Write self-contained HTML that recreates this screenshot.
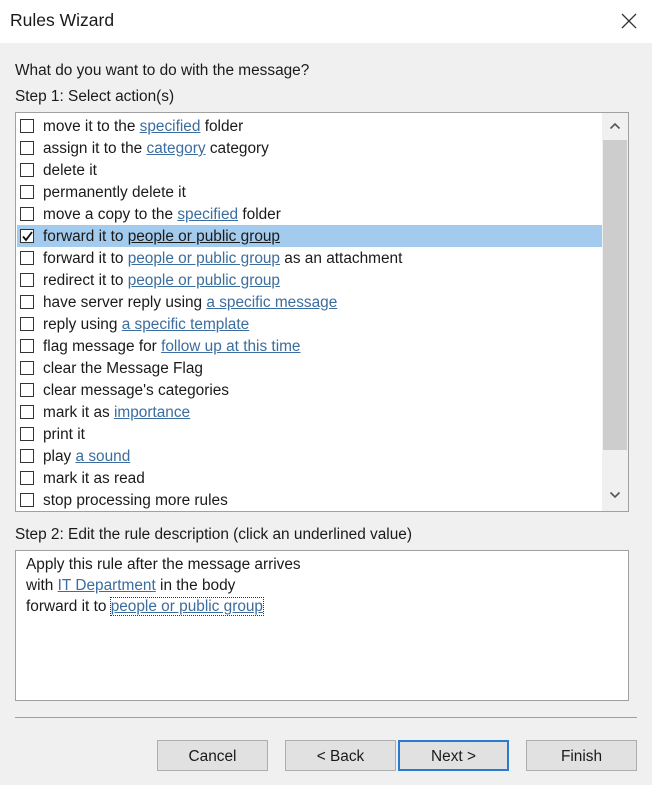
<!DOCTYPE html>
<html><head><style>
*{margin:0;padding:0;box-sizing:border-box}
body{width:652px;height:785px;background:#f0f0f0;font-family:"Liberation Sans",sans-serif;font-size:15.4px;color:#1a1a1a;position:relative;overflow:hidden}
.a{position:absolute}
.title{left:0;top:0;width:652px;height:43px;background:#fff}
a{color:#3b6d9e;text-decoration:underline}
.row{position:absolute;left:1px;width:585px;height:22px;line-height:23px;padding-left:26px;white-space:nowrap}
.cb{position:absolute;left:3px;top:4px;width:14px;height:14px;border:1px solid #333;background:#fff}
.sel{background:#a3cbee}
.btn{position:absolute;top:740px;width:111px;height:31px;background:#e1e1e1;border:1px solid #adadad;text-align:center;line-height:31px;font-size:15.4px}
</style></head><body>
<div class="a title"></div>
<div class="a" style="left:10px;top:10px;font-size:17.5px">Rules Wizard</div>
<svg class="a" style="left:621px;top:13px" width="16" height="16"><path d="M1 1L15 15M15 1L1 15" stroke="#333" stroke-width="1.3"/></svg>
<div class="a" style="left:15px;top:62px">What do you want to do with the message?</div>
<div class="a" style="left:15px;top:88px">Step 1: Select action(s)</div>
<div class="a" style="left:15px;top:112px;width:614px;height:400px;background:#fff;border:1px solid #a0a0a0">
<div class="row" style="top:2px"><span class="cb"></span>move it to the <a>specified</a> folder</div>
<div class="row" style="top:24px"><span class="cb"></span>assign it to the <a>category</a> category</div>
<div class="row" style="top:46px"><span class="cb"></span>delete it</div>
<div class="row" style="top:68px"><span class="cb"></span>permanently delete it</div>
<div class="row" style="top:90px"><span class="cb"></span>move a copy to the <a>specified</a> folder</div>
<div class="row sel" style="top:112px"><span class="cb"><svg class="a" style="left:0;top:0" width="13" height="13"><path d="M2 6.5L5 10L11 2" stroke="#111" stroke-width="1.8" fill="none"/></svg></span>forward it to <span style="text-decoration:underline">people or public group</span></div>
<div class="row" style="top:134px"><span class="cb"></span>forward it to <a>people or public group</a> as an attachment</div>
<div class="row" style="top:156px"><span class="cb"></span>redirect it to <a>people or public group</a></div>
<div class="row" style="top:178px"><span class="cb"></span>have server reply using <a>a specific message</a></div>
<div class="row" style="top:200px"><span class="cb"></span>reply using <a>a specific template</a></div>
<div class="row" style="top:222px"><span class="cb"></span>flag message for <a>follow up at this time</a></div>
<div class="row" style="top:244px"><span class="cb"></span>clear the Message Flag</div>
<div class="row" style="top:266px"><span class="cb"></span>clear message's categories</div>
<div class="row" style="top:288px"><span class="cb"></span>mark it as <a>importance</a></div>
<div class="row" style="top:310px"><span class="cb"></span>print it</div>
<div class="row" style="top:332px"><span class="cb"></span>play <a>a sound</a></div>
<div class="row" style="top:354px"><span class="cb"></span>mark it as read</div>
<div class="row" style="top:376px"><span class="cb"></span>stop processing more rules</div>
<div class="a" style="left:586px;top:0;width:26px;height:398px;background:#f0f0f0"></div>
<div class="a" style="left:587px;top:27px;width:24px;height:310px;background:#cdcdcd"></div>
<svg class="a" style="left:592px;top:8px" width="14" height="10"><path d="M2.5 7.5L7 3L11.5 7.5" stroke="#555" stroke-width="1.6" fill="none"/></svg>
<svg class="a" style="left:592px;top:377px" width="14" height="10"><path d="M2.5 2.5L7 7L11.5 2.5" stroke="#555" stroke-width="1.6" fill="none"/></svg>
</div>
<div class="a" style="left:15px;top:526px">Step 2: Edit the rule description (click an underlined value)</div>
<div class="a" style="left:15px;top:550px;width:614px;height:151px;background:#fff;border:1px solid #a0a0a0;padding:3px 0 0 10px;line-height:21px">
Apply this rule after the message arrives<br>with <a>IT Department</a> in the body<br>forward it to <a style="outline:1px dotted #333">people or public group</a>
</div>
<div class="a" style="left:15px;top:717px;width:622px;height:1px;background:#a0a0a0"></div>
<div class="btn" style="left:157px">Cancel</div>
<div class="btn" style="left:285px">&lt; Back</div>
<div class="btn" style="left:398px;border:2px solid #2a7ad2;line-height:29px">Next &gt;</div>
<div class="btn" style="left:526px">Finish</div>
</body></html>
